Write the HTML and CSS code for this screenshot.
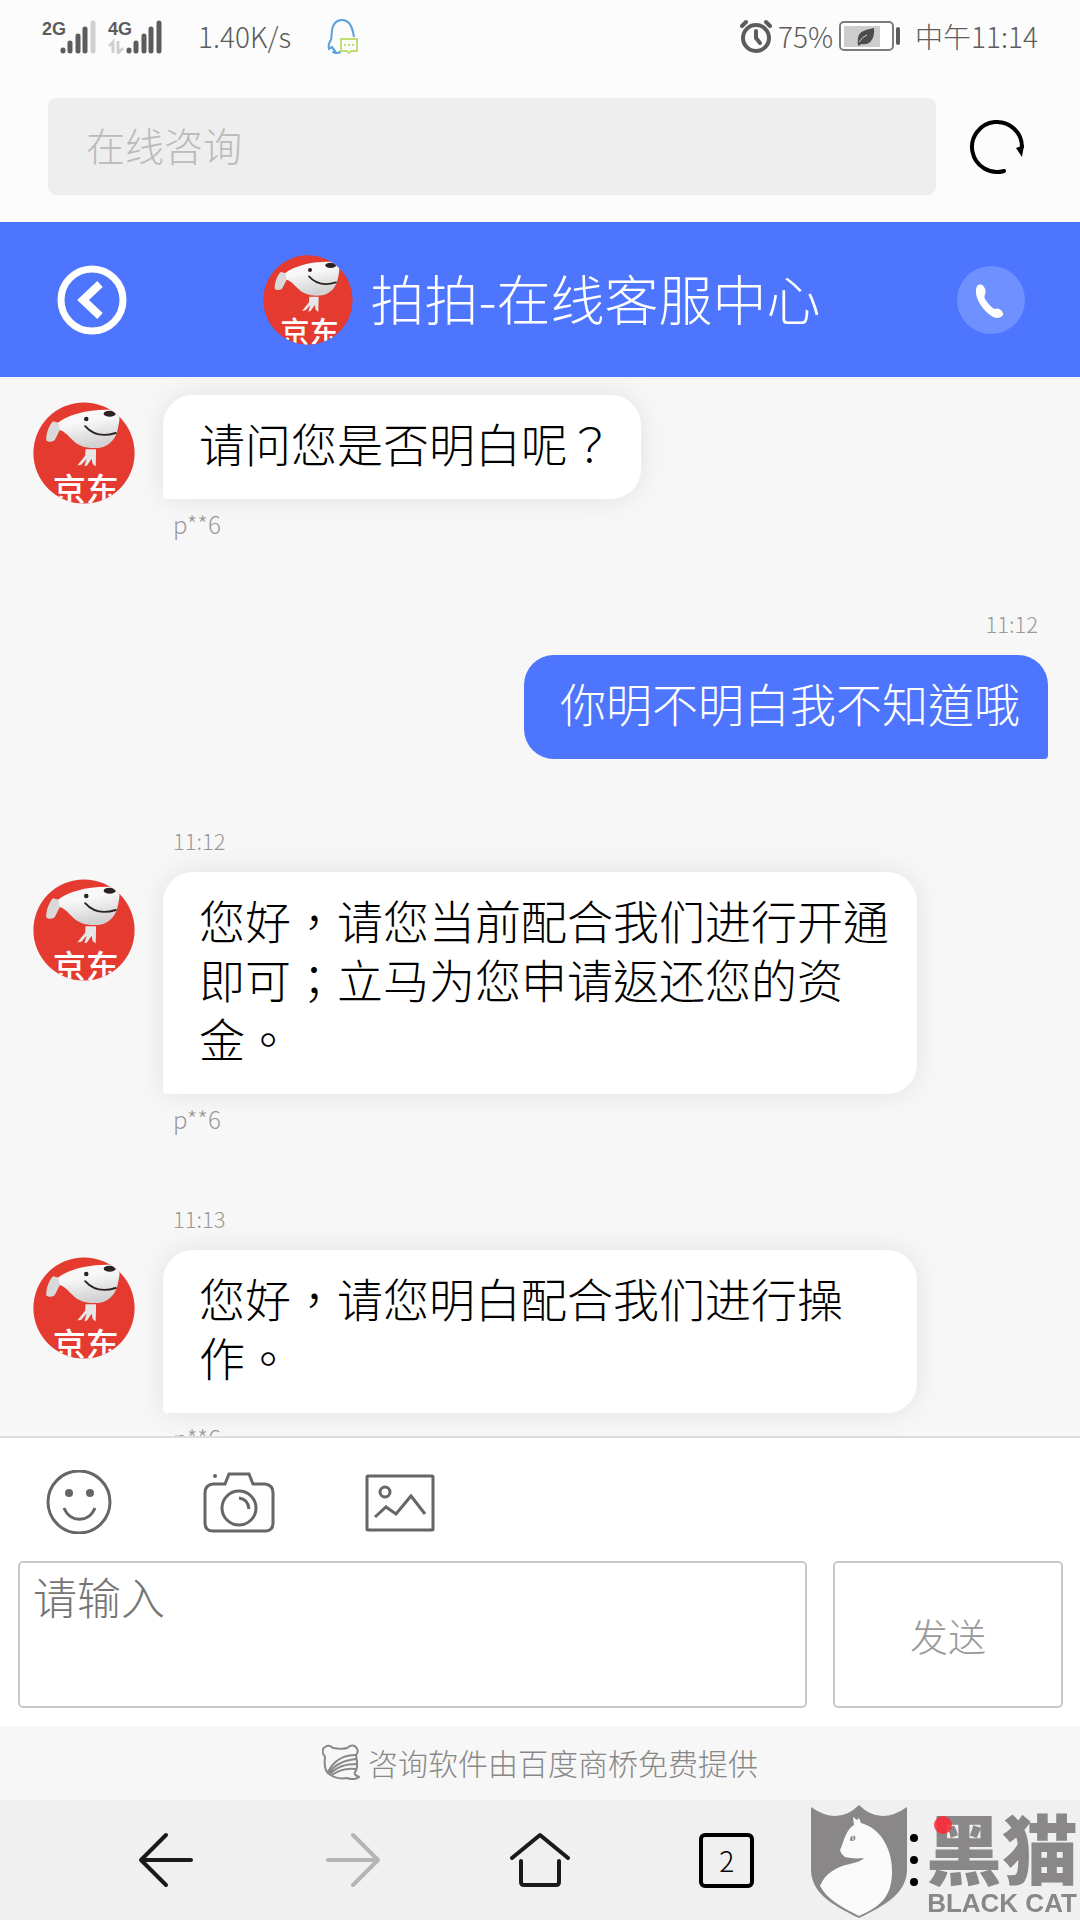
FILE: index.html
```html
<!DOCTYPE html>
<html lang="zh-CN">
<head>
    <meta charset="UTF-8">
    <meta name="viewport" content="width=device-width, initial-scale=1.0">
    <title>在线咨询</title>
    <link rel="stylesheet" href="styles.css">
</head>
<body>

<!-- shared avatar drawing -->
<svg class="defs" aria-hidden="true">
    <defs>
        <linearGradient id="head-shade" x1="0" y1="0" x2="0.3" y2="1">
            <stop offset="0.4" stop-color="#f8f8f8"/>
            <stop offset="1" stop-color="#d2d2d2"/>
        </linearGradient>
        <clipPath id="round"><circle cx="135" cy="135" r="134"/></clipPath>
        <symbol id="joy" viewBox="0 0 270 270">
            <g clip-path="url(#round)">
                <rect width="270" height="270" fill="#e43a30"/>
                <path d="M53 51C42 62 34 84 35 102C42 107 54 106 58 100L71 74L66 54Z" fill="#d9d9d9"/>
                <path d="M66 55C95 32 150 17 216 21C231 25 231 43 226 64C221 96 204 116 178 121C145 125 121 118 104 100C91 86 80 76 70 74Z" fill="url(#head-shade)"/>
                <ellipse cx="203" cy="31" rx="16" ry="8" fill="#2b2321"/>
                <circle cx="141" cy="45" r="6" fill="#2b2321"/>
                <path d="M138 64Q168 98 219 82" fill="none" stroke="#2b2321" stroke-width="5" stroke-linecap="round"/>
                <path d="M139 125H167L166 171L158 164L155 150L143 168L136 170L142 150L128 166L117 168L138 142Z" fill="#e6e6e6"/>
                <text x="140" y="264" class="joy-text">京东</text>
            </g>
        </symbol>
    </defs>
</svg>

<div class="status-bar">
    <div class="status-left">
        <svg class="signal" viewBox="0 0 54 36" width="54" height="36">
            <text x="0" y="17" class="net-text">2G</text>
            <g stroke="#5c5c5c" stroke-width="5" stroke-linecap="round">
                <path d="M21 32V33M28 25V33M36 18V33M43 11V33"/>
                <path d="M51 5V33" stroke="#cfcfcf"/>
            </g>
        </svg>
        <svg class="signal" viewBox="0 0 54 36" width="54" height="36">
            <text x="0" y="17" class="net-text">4G</text>
            <path d="M1 28L5 24V35M10 23V35L15 30" fill="none" stroke="#cfcfcf" stroke-width="3"/>
            <g stroke="#5c5c5c" stroke-width="5" stroke-linecap="round">
                <path d="M21 32V33M28 25V33M36 18V33M43 11V33M51 5V33"/>
            </g>
        </svg>
        <span class="speed">1.40K/s</span>
        <svg class="qq" viewBox="0 0 32 36" width="32" height="36">
            <path d="M4 22C2 24 1 29 2 31L5 29C6 31 7 32 8 33C5 34 6 35 10 35Q13 35 14 33M4 22C5 19 4 18 5 13C6 5 10 2 15 2S24 5 26 14L27 19" fill="none" stroke="#5b9fdc" stroke-width="2"/>
            <path d="M14 21H30V33H24L22 35L20 33H14Z" fill="#fcfcfc" stroke="#c0de74" stroke-width="2"/>
            <path d="M17 27H19M21 27H23M25 27H27" stroke="#c0de74" stroke-width="2"/>
        </svg>
    </div>
    <div class="status-right">
        <svg viewBox="0 0 32 36" width="32" height="36" fill="none" stroke="#5c5c5c" stroke-linecap="round">
            <circle cx="16" cy="20" r="13" stroke-width="4"/>
            <path d="M2 8L6 4M30 8L26 4M16 13V20L20 25" stroke-width="4"/>
        </svg>
        <span>75%</span>
        <svg class="battery" viewBox="0 0 62 32" width="62" height="32">
            <rect x="1" y="2" width="53" height="28" rx="4" fill="#fff" stroke="#7c7c7c" stroke-width="2"/>
            <rect x="5" y="6" width="36" height="21" fill="#cdcdcd"/>
            <path d="M19 25C18 12 22 11 35 8C36 19 31 26 22 24L20 26Z" fill="#4c4c4c"/>
            <path d="M20 22Q24 16 28 15" fill="none" stroke="#cdcdcd"/>
            <path d="M59 9V23" stroke="#5c5c5c" stroke-width="4" stroke-linecap="round"/>
        </svg>
        <span class="clock">中午11:14</span>
    </div>
</div>

<div class="address-bar">
    <input type="text" class="address" value="在线咨询" aria-label="地址栏" readonly>
    <button class="icon-btn" aria-label="刷新">
        <svg viewBox="0 0 58 58" width="58" height="58">
            <path d="M36 53A25 25 0 1 1 54 29" fill="none" stroke="#000" stroke-width="4" stroke-linecap="round"/>
            <path d="M48 30L56 27L54 39Z"/>
        </svg>
    </button>
</div>

<header class="chat-header">
    <button class="icon-btn" aria-label="返回">
        <svg viewBox="0 0 70 70" width="70" height="70" fill="none" stroke="#fff">
            <circle cx="35" cy="35" r="31" stroke-width="7"/>
            <path d="M43 19L26 35L43 51" stroke-width="8"/>
        </svg>
    </button>
    <div class="chat-title">
        <svg class="title-logo" viewBox="0 0 270 270"><use href="#joy"/></svg>
        <h1>拍拍-在线客服中心</h1>
    </div>
    <button class="icon-btn" aria-label="电话">
        <svg viewBox="0 0 70 70" width="70" height="70">
            <circle cx="35" cy="35" r="34" fill="#6f90ff"/>
            <path d="M21 21C24 18 28 20 29 24C31 29 27 30 29 34C32 39 36 43 39 44C42 42 48 46 47 50C44 54 39 54 34 50C25 43 19 33 20 24Z" fill="#fff"/>
        </svg>
    </button>
</header>

<main class="chat-messages">
    <div class="message">
        <svg class="avatar" viewBox="0 0 270 270"><use href="#joy"/></svg>
        <div class="message-body">
            <p class="bubble">请问您是否明白呢？</p>
            <span class="name">p**6</span>
        </div>
    </div>

    <div class="message user-message">
        <div class="message-body">
            <span class="time">11:12</span>
            <p class="bubble">你明不明白我不知道哦</p>
        </div>
    </div>

    <div class="message timed">
        <svg class="avatar" viewBox="0 0 270 270"><use href="#joy"/></svg>
        <div class="message-body">
            <span class="time">11:12</span>
            <p class="bubble">您好，请您当前配合我们进行开通即可；立马为您申请返还您的资金。</p>
            <span class="name">p**6</span>
        </div>
    </div>

    <div class="message timed">
        <svg class="avatar" viewBox="0 0 270 270"><use href="#joy"/></svg>
        <div class="message-body">
            <span class="time">11:13</span>
            <p class="bubble">您好，请您明白配合我们进行操作。</p>
            <span class="name">p**6</span>
        </div>
    </div>
</main>

<div class="chat-input">
    <div class="tools">
        <button class="icon-btn" aria-label="表情">
            <svg viewBox="0 0 72 64" width="72" height="64" fill="none" stroke="#666" stroke-width="3">
                <circle cx="36" cy="32" r="31"/>
                <circle cx="26" cy="23" r="4" fill="#666" stroke="none"/>
                <circle cx="47" cy="23" r="4" fill="#666" stroke="none"/>
                <path d="M21 38C27 53 46 53 52 38"/>
            </svg>
        </button>
        <button class="icon-btn" aria-label="拍照">
            <svg viewBox="0 0 72 64" width="72" height="64" fill="none" stroke="#666" stroke-width="3">
                <path d="M10 14H22L26 4H46L50 14H62Q70 15 70 23V53Q70 61 62 61H10Q2 61 2 53V23Q2 15 10 14Z"/>
                <circle cx="36" cy="38" r="17"/>
                <path d="M36 28Q45 29 46 39"/>
                <circle cx="12" cy="6" r="2" fill="#666" stroke="none"/>
            </svg>
        </button>
        <button class="icon-btn" aria-label="图片">
            <svg viewBox="0 0 72 64" width="72" height="64" fill="none" stroke="#666" stroke-width="3">
                <rect x="4" y="6" width="66" height="54" rx="1"/>
                <circle cx="22" cy="22" r="5"/>
                <path d="M12 47L23 37L33 44L48 26L62 44"/>
            </svg>
        </button>
    </div>
    <form class="compose">
        <textarea placeholder="请输入" aria-label="请输入"></textarea>
        <button type="button" class="send">发送</button>
    </form>
</div>

<footer class="powered">
    <svg viewBox="0 0 38 36" width="38" height="36" fill="none" stroke="#888" stroke-width="2">
        <path d="M11 4C6 -1 -1 4 1 9C1 11 3 12 3 13C2 22 4 28 7 30C14 35 20 35 25 34C30 36 35 35 37 33C33 31 32 30 33 28C36 25 35 16 34 11C38 7 34 0 28 2L25 4C19 6 15 4 11 4Z"/>
        <path d="M6 28C11 18 20 11 34 11M7 29C13 20 22 16 35 15M8 30C16 22 24 20 35 20M10 31C18 25 26 24 34 25"/>
    </svg>
    <span>咨询软件由百度商桥免费提供</span>
</footer>

<nav class="browser-nav">
    <button class="icon-btn" aria-label="后退">
        <svg viewBox="0 0 60 60" width="60" height="60" fill="none" stroke="#1a1a1a" stroke-width="4" stroke-linecap="round" stroke-linejoin="round">
            <path d="M30 5L5 30L30 55M5 30H55"/>
        </svg>
    </button>
    <button class="icon-btn" aria-label="前进" disabled>
        <svg viewBox="0 0 60 60" width="60" height="60" fill="none" stroke="#b4b4b4" stroke-width="4" stroke-linecap="round" stroke-linejoin="round">
            <path d="M30 5L55 30L30 55M55 30H5"/>
        </svg>
    </button>
    <button class="icon-btn" aria-label="主页">
        <svg viewBox="0 0 60 60" width="60" height="60" fill="none" stroke="#1a1a1a" stroke-width="4" stroke-linecap="round" stroke-linejoin="round">
            <path d="M2 28L30 5L58 28"/>
            <path d="M11 31V52Q11 55 14 55H46Q49 55 49 52V31"/>
        </svg>
    </button>
    <button class="tabs" aria-label="2 个标签页">2</button>
    <button class="icon-btn menu" aria-label="菜单">
        <svg viewBox="0 0 60 60" width="60" height="60">
            <circle cx="30" cy="8" r="4"/>
            <circle cx="30" cy="30" r="4"/>
            <circle cx="30" cy="52" r="4"/>
        </svg>
    </button>
</nav>

<div class="watermark">
    <svg viewBox="0 0 98 116" width="98" height="116">
        <path d="M1 3Q28 22 49 1Q70 22 97 3V65C97 88 78 100 49 114C20 100 1 88 1 65Z" fill="#8a8788"/>
        <path d="M43 13L47 16L49 14L51 19C71 24 83 46 82 70C81 92 72 102 49 112C31 103 16 94 10 82C15 69 28 62 40 60C47 58 51 57 54 54C46 55 39 54 35 53C31 50 29 46 31 44C35 33 37 25 44 21Z" fill="#fafafa"/>
        <path d="M40 36Q40 31 45 32Q47 37 41 37Z" fill="#8a8788"/>
        <path d="M43 32V36" stroke="#fafafa"/>
    </svg>
    <div class="watermark-text">
        <strong>黑猫</strong>
        <span>BLACK CAT</span>
        <i class="red-dot"></i>
    </div>
</div>

</body>
</html>
```

FILE: styles.css
```css
* {
    box-sizing: border-box;
}

body {
    margin: 0;
    height: 100vh;
    display: flex;
    flex-direction: column;
    background: #fcfcfc;
    color: #000;
    font-family: "Noto Sans CJK SC", sans-serif;
    font-weight: 300;
}

button,
input,
textarea {
    font: inherit;
}

svg {
    display: block;
    flex: none;
}

.defs {
    position: absolute;
    width: 0;
    height: 0;
}

.joy-text {
    font-size: 88px;
    font-weight: 500;
    fill: #fff;
    text-anchor: middle;
}

.icon-btn {
    display: flex;
    align-items: center;
    justify-content: center;
    padding: 0;
    border: none;
    background: none;
    cursor: pointer;
}

/* status bar */
.status-bar {
    display: flex;
    justify-content: space-between;
    align-items: center;
    height: 72px;
    padding: 0 42px;
    color: #5c5c5c;
    font-size: 28px;
    line-height: 32px;
}

.status-left,
.status-right {
    display: flex;
    align-items: center;
}

.status-left {
    gap: 12px;
}

.status-right {
    gap: 6px;
}

.net-text {
    font-family: "Liberation Sans", sans-serif;
    font-size: 18px;
    font-weight: bold;
    fill: #5c5c5c;
}

.speed {
    margin: 0 24px;
}

.clock {
    margin-left: 8px;
}

/* address bar */
.address-bar {
    display: flex;
    align-items: center;
    gap: 32px;
    padding: 26px 54px 27px 48px;
}

.address {
    flex: 1;
    min-width: 0;
    height: 97px;
    padding: 0 38px 6px;
    border: none;
    border-radius: 8px;
    outline: none;
    background: #eee;
    color: #bbb;
    font-size: 39px;
}

/* chat header */
.chat-header {
    display: flex;
    justify-content: space-between;
    align-items: center;
    height: 155px;
    padding: 0 54px 0 57px;
    background: #4e75fd;
    color: #fff;
}

.chat-title {
    display: flex;
    align-items: center;
    gap: 18px;
}

.title-logo {
    width: 90px;
    height: 90px;
}

.chat-title h1 {
    margin: 0;
    padding-bottom: 4px;
    font-size: 54px;
    font-weight: 300;
    line-height: 72px;
}

/* messages */
.chat-messages {
    flex: 1;
    min-height: 0;
    overflow: hidden;
    display: flex;
    flex-direction: column;
    gap: 63px;
    padding: 18px 32px 0 33px;
    background: #f7f7f7;
}

.message {
    flex: none;
    display: flex;
    align-items: flex-start;
    gap: 28px;
}

.message-body {
    display: flex;
    flex-direction: column;
    align-items: flex-start;
    max-width: 754px;
}

.avatar {
    width: 102px;
    height: 102px;
    margin-top: 7px;
}

.timed .avatar {
    margin-top: 57px;
}

/* TC face without locl keeps the punctuation centred */
.bubble {
    margin: 0;
    padding: 18px 28px 27px 36px;
    border-radius: 30px 30px 30px 4px;
    background: #fff;
    box-shadow: 0 0 28px rgba(0, 0, 0, 0.09);
    font-family: "Noto Sans CJK TC", "Noto Sans CJK SC", sans-serif;
    font-feature-settings: "locl" 0;
    font-size: 46px;
    line-height: 59px;
}

.time,
.name {
    padding: 0 10px;
    color: #999;
    font-size: 22px;
    line-height: 36px;
}

.time {
    margin-bottom: 14px;
}

.name {
    margin-top: 7px;
    font-size: 24px;
}

.user-message {
    justify-content: flex-end;
}

.user-message .message-body {
    align-items: flex-end;
}

.user-message .bubble {
    border-radius: 30px 30px 4px 30px;
    background: #4e75fd;
    box-shadow: none;
    color: #fff;
}

/* input area */
.chat-input {
    padding: 32px 17px 18px 18px;
    border-top: 2px solid #ddd;
    background: #fff;
}

.tools {
    display: flex;
    gap: 88px;
    padding: 0 25px;
    margin-bottom: 27px;
}

.compose {
    display: flex;
    gap: 26px;
}

.compose textarea {
    flex: 1;
    min-width: 0;
    height: 147px;
    padding: 4px 13px;
    border: 2px solid #c8c8c8;
    border-radius: 5px;
    outline: none;
    resize: none;
    font-size: 44px;
    line-height: 58px;
}

.compose textarea::placeholder {
    color: #757575;
}

.send {
    width: 22%;
    border: 2px solid #c8c8c8;
    border-radius: 5px;
    background: #fff;
    color: #999;
    font-size: 38px;
    cursor: pointer;
}

/* footer */
.powered {
    display: flex;
    justify-content: center;
    align-items: center;
    gap: 8px;
    height: 74px;
    padding-bottom: 2px;
    background: #f7f7f7;
    color: #888;
    font-size: 30px;
}

.browser-nav {
    display: grid;
    grid-template-columns: repeat(5, 1fr);
    place-items: center;
    height: 120px;
    padding: 0 73px;
    background: #f0f0f0;
}

.tabs {
    width: 55px;
    height: 55px;
    padding: 0;
    border: 4px solid #000;
    border-radius: 6px;
    background: none;
    color: #000;
    font-size: 28px;
    line-height: 40px;
}

/* corner watermark lies over the nav bar */
.watermark {
    position: fixed;
    right: 2px;
    bottom: 0;
    display: flex;
    align-items: flex-end;
    gap: 18px;
    color: #8a8788;
    pointer-events: none;
}

.watermark-text {
    position: relative;
    display: flex;
    flex-direction: column;
    align-items: center;
}

.watermark-text strong {
    font-size: 76px;
    font-weight: 900;
    line-height: 80px;
}

.watermark-text span {
    font-family: "Liberation Sans", sans-serif;
    font-size: 26px;
    font-weight: bold;
    line-height: 34px;
}

.red-dot {
    position: absolute;
    top: 10px;
    left: 8px;
    width: 18px;
    height: 18px;
    border-radius: 50%;
    background: #ff2733;
    opacity: 0.85;
}
```
